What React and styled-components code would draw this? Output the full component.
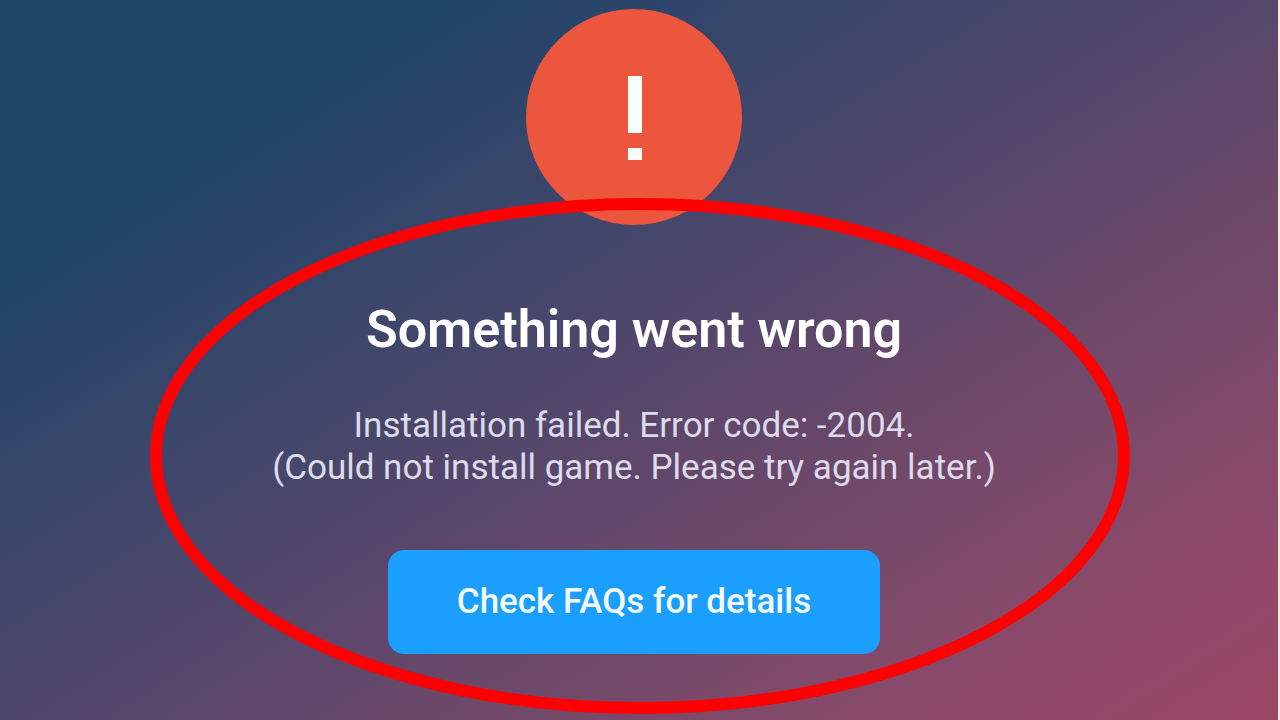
import React from 'react';
import styled, { createGlobalStyle } from 'styled-components';

const GlobalStyle = createGlobalStyle`
  *, *::before, *::after { box-sizing: border-box; }
  html { background: #fbe9d9; }
  body { margin: 0; font-family: Roboto, "Liberation Sans", sans-serif; }
`;

const Screen = styled.main`
  position: relative;
  display: flex;
  flex-direction: column;
  align-items: center;
  min-height: 100vh;
  margin-right: 2px;
  padding: 9px 10px 66px 0;
  color: #fff;
  text-align: center;
  overflow: hidden;
  background: linear-gradient(148deg, #204667 0%, #204667 19%, #2b446a 26%, #38466a 33%, #46476b 43%, #5d476b 56%, #6b4869 65%, #824a6a 79%, #934869 90%, #9b4766 100%);
`;

const Badge = styled.svg`
  display: block;
  width: 216px;
  height: 216px;
`;

const Title = styled.h1`
  margin: 76px 0 0;
  font-size: 52px;
  line-height: 58px;
  font-weight: 600;
`;

const Message = styled.p`
  margin: 46px 0 0;
  font-size: 35px;
  line-height: 42px;
  color: #dedbea;
`;

const FaqButton = styled.button`
  margin: 61px 0 0;
  width: 492px;
  max-width: 90%;
  height: 104px;
  border: 0;
  border-radius: 16px;
  background: #1a9fff;
  color: #f4fbff;
  font: 500 35px/42px Roboto, "Liberation Sans", sans-serif;
  cursor: pointer;
`;

const Highlight = styled.svg`
  position: absolute;
  top: 197px;
  left: 50%;
  width: 982px;
  height: 518px;
  margin-left: -490px;
  pointer-events: none;
`;

export default function App() {
  return (
    <>
      <GlobalStyle />
      <Screen>
        <Badge viewBox="0 0 216 216" role="img" aria-label="Error">
          <circle cx="108" cy="108" r="108" fill="#eb563d" />
          <path d="M102 67h14v57h-14zM102 139h14v12h-14z" fill="#f8fdfb" />
        </Badge>
        <Title>Something went wrong</Title>
        <Message>
          Installation failed. Error code: -2004.
          <br />
          (Could not install game. Please try again later.)
        </Message>
        <FaqButton type="button">Check FAQs for details</FaqButton>
        <Highlight viewBox="0 0 982 518" aria-hidden="true">
          <ellipse cx="491" cy="259" rx="484" ry="252" fill="none" stroke="#ff0000" strokeWidth="12" />
        </Highlight>
      </Screen>
    </>
  );
}
